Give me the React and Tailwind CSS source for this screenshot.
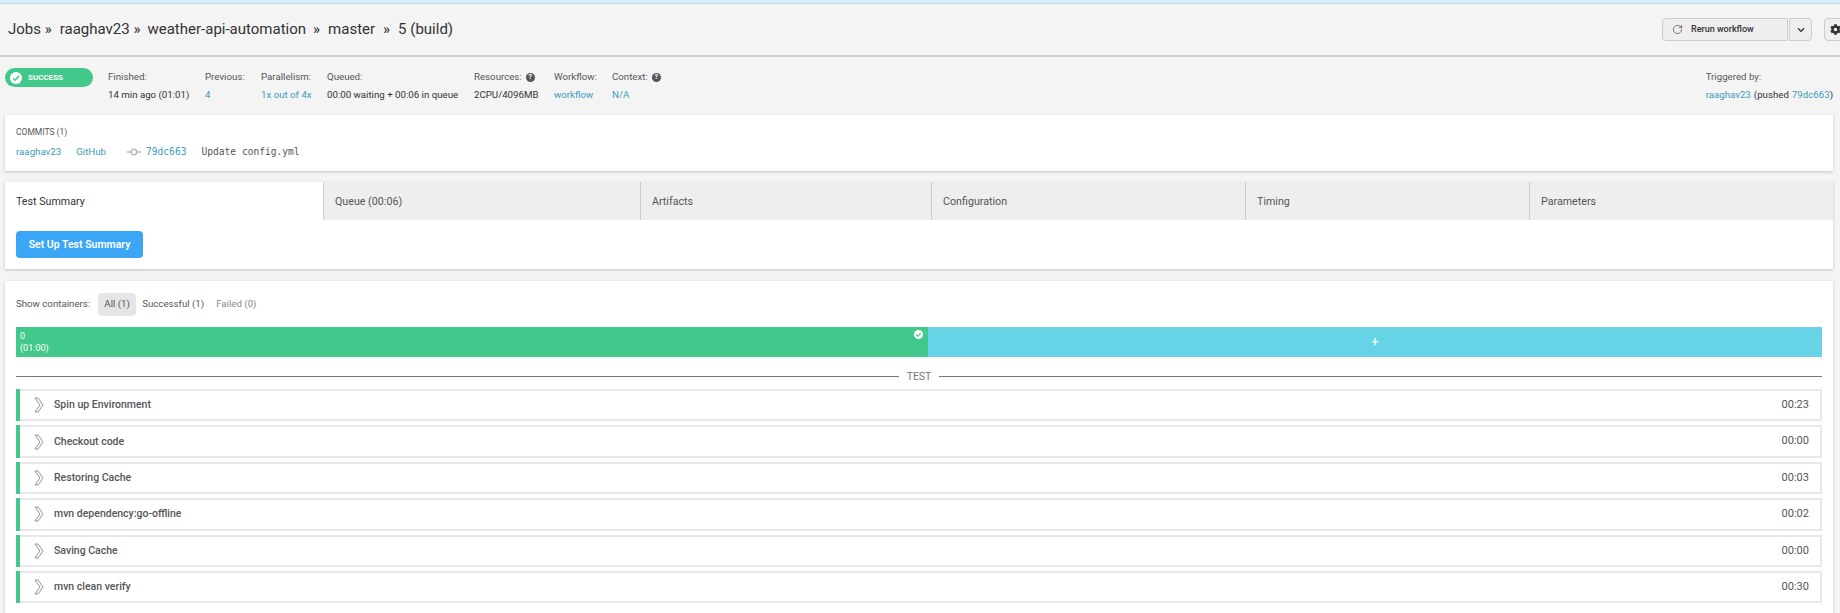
import React from "react";
import { RotateCw } from "lucide-react";
import { FaChevronDown, FaCog } from "react-icons/fa";

const steps = [
  ["Spin up Environment", "00:23"],
  ["Checkout code", "00:00"],
  ["Restoring Cache", "00:03"],
  ["mvn dependency:go-offline", "00:02"],
  ["Saving Cache", "00:00"],
  ["mvn clean verify", "00:30"],
];

const tabs = [
  ["Queue (00:06)", "w-[317px]"],
  ["Artifacts", "w-[291px]"],
  ["Configuration", "w-[314px]"],
  ["Timing", "w-[284px]"],
  ["Parameters", "flex-1"],
];

function Help() {
  return (
    <span className="ml-1 inline-flex h-[9px] w-[9px] items-center justify-center rounded-full bg-[#555] text-[7px] font-bold leading-none text-white">
      ?
    </span>
  );
}

function Meta({ label, className, help, children }) {
  return (
    <div className={className}>
      <div className="flex h-[18px] items-center text-[#555]">
        {label}
        {help && <Help />}
      </div>
      <div className="flex h-[18px] items-center text-[#333]">{children}</div>
    </div>
  );
}

function CheckDot({ className }) {
  return (
    <svg viewBox="0 0 16 16" className={className}>
      <circle cx="8" cy="8" r="8" fill="#fff" />
      <path d="M4.2 8.3l2.6 2.6 5-5.4" fill="none" stroke="#42c88a" strokeWidth="2" />
    </svg>
  );
}

function Step({ name, time }) {
  return (
    <div className="flex h-[32.4px] items-center border-2 border-l-0 border-[#e8e8e8] bg-white pr-[11px]">
      <div className="h-[32.4px] w-1 self-center bg-[#42c88a]" />
      <svg viewBox="0 0 10 16" className="ml-[14px] h-4 w-[10px]">
        <path d="M1 1h3l5 7-5 7H1l5-7z" fill="none" stroke="#888" strokeWidth="0.9" />
      </svg>
      <span className="ml-[10px] text-[10.5px] font-medium text-[#555]">{name}</span>
      <span className="ml-auto text-[11px] text-[#555]">{time}</span>
    </div>
  );
}

export default function App() {
  return (
    <div className="h-[613px] overflow-hidden bg-[#f4f4f4] font-['Roboto',sans-serif] text-[9.7px]">
      <div className="h-1 border-b border-[#b5dcf5] bg-[#d9edfb]" />
      <div className="flex h-[53px] items-center border-b-2 border-[#cfcfcf] pl-2">
        <div className="text-[15px] text-[#333]">
          Jobs »<span className="ml-2">raaghav23 »</span>
          <span className="ml-[7px]">weather-api-automation</span>
          <span className="ml-[7px]">»</span>
          <span className="ml-2">master</span>
          <span className="ml-2">»</span>
          <span className="ml-2">5 (build)</span>
        </div>
        <div className="ml-auto flex h-[23px] w-[178px] shrink-0 overflow-hidden">
          <div className="flex h-full w-[126px] shrink-0 items-center rounded-l-sm border border-[#ccc] bg-[#eee] pl-[9px] text-[#333]">
            <RotateCw size={11} strokeWidth={1.5} className="text-[#444]" />
            <span className="ml-[8px] text-[9px] font-medium">Rerun workflow</span>
          </div>
          <div className="ml-px flex h-full w-[23px] shrink-0 items-center justify-center rounded-r-sm border border-[#ccc] bg-[#eee]">
            <FaChevronDown size={8} className="text-[#333]" />
          </div>
          <div className="ml-3 flex h-full w-[30px] shrink-0 items-center rounded-sm border border-[#ccc] bg-[#eee] pl-[5px]">
            <FaCog size={11} className="text-[#333]" />
          </div>
        </div>
      </div>

      <div className="flex h-[58px] items-start pt-[11px] pr-[7px] pl-[5px]">
        <div className="flex h-[19px] w-[88px] shrink-0 items-center rounded-full bg-[#42c88a] pl-[5px] text-[8px] font-bold text-white">
          <CheckDot className="h-3 w-3" />
          <span className="ml-[6px]">SUCCESS</span>
        </div>
        <Meta label="Finished:" className="ml-[15px] w-[97px]">14 min ago (01:01)</Meta>
        <Meta label="Previous:" className="w-[56px]"><span className="text-[#3a9dbb]">4</span></Meta>
        <Meta label="Parallelism:" className="w-[66px]"><span className="text-[#3a9dbb]">1x out of 4x</span></Meta>
        <Meta label="Queued:" className="w-[147px]">00:00 waiting + 00:06 in queue</Meta>
        <Meta label="Resources:" help className="w-[80px]">2CPU/4096MB</Meta>
        <Meta label="Workflow:" className="w-[58px]"><span className="text-[#3a9dbb]">workflow</span></Meta>
        <Meta label="Context:" help><span className="text-[#3a9dbb]">N/A</span></Meta>
        <div className="ml-auto">
          <div className="flex h-[18px] items-center text-[#555]">Triggered by:</div>
          <div className="flex h-[18px] items-center text-[#333]">
            <span className="text-[#3a9dbb]">raaghav23</span>
            <span className="ml-[3px]">(pushed</span>
            <span className="ml-[3px] text-[#3a9dbb]">79dc663</span>)
          </div>
        </div>
      </div>

      <div className="ml-[5px] h-[56px] w-[1828px] bg-white pt-[11px] pl-[11px] shadow-[0_1px_3px_rgba(0,0,0,0.2)]">
        <div className="text-[8.5px] leading-3 text-[#555]">COMMITS (1)</div>
        <div className="mt-[7px] flex h-[14px] items-center">
          <span className="text-[#3a9dbb]">raaghav23</span>
          <span className="ml-[15px] text-[#3a9dbb]">GitHub</span>
          <svg viewBox="0 0 14 8" className="ml-[21px] h-2 w-[14px]">
            <path d="M0 4h4M10 4h4" stroke="#bbb" strokeWidth="1.5" />
            <circle cx="7" cy="4" r="2.8" fill="none" stroke="#bbb" strokeWidth="1.5" />
          </svg>
          <span className="ml-[5px] font-['DejaVu_Sans_Mono',monospace] text-[9.6px] text-[#3a9dbb]">79dc663</span>
          <span className="ml-[15px] font-['DejaVu_Sans_Mono',monospace] text-[9.6px] text-[#555]">Update config.yml</span>
        </div>
      </div>

      <div className="mt-[11px] ml-[5px] h-[87px] w-[1828px] bg-white shadow-[0_1px_3px_rgba(0,0,0,0.2)]">
        <div className="flex h-[38px] text-[10.7px]">
          <div className="flex w-[318px] items-center pt-[2px] pl-[11px] text-[#333]">Test Summary</div>
          {tabs.map(([name, w]) => (
            <div key={name} className={`flex items-center border-l border-[#ccc] bg-[#eee] pt-[2px] pl-[11px] text-[#555] ${w}`}>
              {name}
            </div>
          ))}
        </div>
        <div className="mt-[11px] ml-[11px] flex h-[27px] w-[127px] items-center justify-center rounded-sm bg-[#3ba6f5] text-[10.5px] font-semibold text-white">
          Set Up Test Summary
        </div>
      </div>

      <div className="mt-3 ml-[5px] h-[340px] w-[1828px] bg-white px-[11px] shadow-[0_1px_3px_rgba(0,0,0,0.2)]">
        <div className="flex h-[46px] items-center text-[#555]">
          <span>Show containers:</span>
          <span className="ml-2 flex h-[23px] w-[38px] items-center justify-center rounded-sm bg-[#e5e5e5]">All (1)</span>
          <span className="ml-[6px]">Successful (1)</span>
          <span className="ml-3 text-[#888]">Failed (0)</span>
        </div>
        <div className="flex h-[30px] text-white">
          <div className="flex w-[912px] justify-between bg-[#42c88a] py-[3px] pr-[5px] pl-1 text-[9px] leading-3">
            <div>
              0
              <br />
              (01:00)
            </div>
            <CheckDot className="h-[9px] w-[9px]" />
          </div>
          <div className="flex flex-1 items-center justify-center bg-[#66d3e6] text-[13px]">+</div>
        </div>
        <div className="mt-3 flex h-[15px] items-center text-[#777]">
          <div className="h-px flex-1 bg-[#777]" />
          <span className="mx-[10px] flex w-5 justify-center text-[10.5px]">TEST</span>
          <div className="h-px flex-1 bg-[#777]" />
        </div>
        <div className="mt-[5px] flex flex-col gap-1">
          {steps.map(([name, time]) => (
            <Step key={name} name={name} time={time} />
          ))}
        </div>
      </div>
    </div>
  );
}
